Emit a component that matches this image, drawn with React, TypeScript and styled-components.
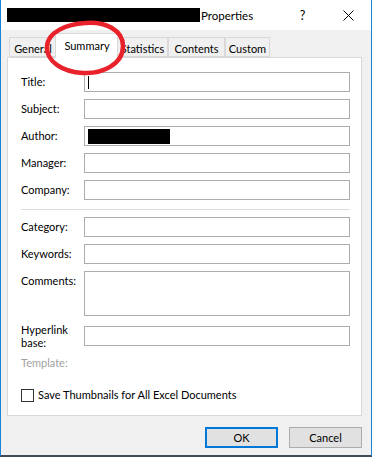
import React from "react";
import styled, { createGlobalStyle } from "styled-components";

const GlobalStyle = createGlobalStyle`
  html, body { margin: 0; padding: 0; background: #ffffff; }
  body { font-family: Lato, "Liberation Sans", sans-serif; }
`;

const Window = styled.div`
  position: relative;
  width: 372px;
  height: 457px;
  box-sizing: border-box;
  border-left: 1px solid #1883d7;
  border-right: 1px solid #1883d7;
  border-bottom: 2px solid #3e4a55;
  background: #f0f0f0;
  display: flex;
  flex-direction: column;
  font: 11px Lato, "Liberation Sans", sans-serif;
  color: #000000;
`;

const TitleBar = styled.div`
  height: 30px;
  background: #ffffff;
  display: flex;
  align-items: center;
  padding-left: 6px;
  flex-shrink: 0;
`;

const Redacted = styled.div<{ $w: number; $h: number }>`
  width: ${(p) => p.$w}px;
  height: ${(p) => p.$h}px;
  background: #000000;
  flex-shrink: 0;
`;

const TitleText = styled.span`
  margin-left: 1px;
  font-size: 11.5px;
  flex: 1;
  margin-top: 1px;
`;

const TitleButton = styled.div<{ $w: number }>`
  width: ${(p) => p.$w}px;
  height: 30px;
  display: flex;
  align-items: center;
  justify-content: center;
  font-size: 12.5px;
`;

const Body = styled.div`
  flex: 1;
  display: flex;
  flex-direction: column;
  padding: 3px 9px 0 6px;
`;

const TabStrip = styled.div`
  display: flex;
  align-items: flex-end;
  height: 24px;
  margin-left: 2px;
  position: relative;
  z-index: 1;
  flex-shrink: 0;
`;

const Tab = styled.div<{ $w: number; $active?: boolean }>`
  width: ${(p) => p.$w}px;
  box-sizing: border-box;
  height: ${(p) => (p.$active ? 25 : 20)}px;
  margin-bottom: ${(p) => (p.$active ? -1 : 0)}px;
  background: ${(p) => (p.$active ? "#ffffff" : "#f0f0f0")};
  border: 1px solid #d9d9d9;
  border-bottom: ${(p) => (p.$active ? "none" : "1px solid #d9d9d9")};
  margin-left: ${(p) => (p.$active ? -2 : 0)}px;
  margin-right: ${(p) => (p.$active ? -2 : 0)}px;
  display: flex;
  justify-content: center;
  align-items: ${(p) => (p.$active ? "flex-start" : "center")};
  padding-top: ${(p) => (p.$active ? 5 : 2)}px;
  white-space: nowrap;
  overflow: hidden;
  &:first-child { margin-left: 0; }
`;

const Panel = styled.div`
  height: 359px;
  flex-shrink: 0;
  box-sizing: border-box;
  background: #ffffff;
  border: 1px solid #d9d9d9;
  padding: 14px 11px 0 13px;
  display: flex;
  flex-direction: column;
  & > * { flex-shrink: 0; }
`;

const FieldGroup = styled.div`
  display: flex;
  flex-direction: column;
  gap: 7px;
`;

const Row = styled.div<{ $top?: boolean; $gap?: number }>`
  display: grid;
  grid-template-columns: 63px 266px;
  align-items: ${(p) => (p.$top ? "start" : "center")};
  margin-top: ${(p) => p.$gap ?? 0}px;
`;

const Label = styled.label`
  line-height: 20px;
`;

const TwoLineLabel = styled.label`
  height: 20px;
  display: flex;
  flex-direction: column;
  justify-content: center;
  line-height: 13px;
`;

const Input = styled.div<{ $h?: number }>`
  height: ${(p) => p.$h ?? 20}px;
  box-sizing: border-box;
  border: 1px solid #adadad;
  background: #ffffff;
  display: flex;
  align-items: center;
  padding-left: 3px;
`;

const Caret = styled.div`
  width: 1px;
  height: 13px;
  background: #000000;
`;

const Separator = styled.div`
  height: 1px;
  width: 329px;
  background: #dcdcdc;
  margin: 9px 0 7px;
`;

const TemplateRow = styled.div`
  margin-top: 7px;
  line-height: 20px;
  color: #a0a0a0;
`;

const CheckRow = styled.div`
  display: flex;
  align-items: center;
  gap: 4px;
  margin-top: 12px;
  line-height: 20px;
`;

const CheckBox = styled.div`
  width: 13px;
  height: 13px;
  box-sizing: border-box;
  border: 1px solid #333333;
  background: #ffffff;
`;

const ButtonRow = styled.div`
  display: flex;
  justify-content: flex-end;
  gap: 11px;
  padding-top: 11px;
`;

const Button = styled.div<{ $default?: boolean }>`
  width: 73px;
  height: 21px;
  box-sizing: border-box;
  background: #e1e1e1;
  border: ${(p) => (p.$default ? "2px solid #0078d7" : "1px solid #adadad")};
  display: flex;
  align-items: center;
  justify-content: center;
`;

const Annotation = styled.svg`
  position: absolute;
  left: 40px;
  top: 18px;
  pointer-events: none;
  z-index: 5;
`;

const fields = ["Title:", "Subject:", "Author:", "Manager:", "Company:"];

const App = () => {
  return (
    <>
      <GlobalStyle />
      <Window>
        <TitleBar>
          <Redacted $w={193} $h={14} />
          <TitleText>Properties</TitleText>
          <TitleButton $w={45}>?</TitleButton>
          <TitleButton $w={46}>
            <svg width="11" height="11" viewBox="0 0 11 11">
              <path d="M0.5 0.5 L10.5 10.5 M10.5 0.5 L0.5 10.5" stroke="#000" strokeWidth="1" />
            </svg>
          </TitleButton>
        </TitleBar>
        <Body>
          <TabStrip>
            <Tab $w={48}>General</Tab>
            <Tab $w={64} $active>Summary</Tab>
            <Tab $w={51}>Statistics</Tab>
            <Tab $w={57}>Contents</Tab>
            <Tab $w={45}>Custom</Tab>
          </TabStrip>
          <Panel>
            <FieldGroup>
              {fields.map((f) => (
                <Row key={f}>
                  <Label>{f}</Label>
                  <Input>
                    {f === "Title:" && <Caret />}
                    {f === "Author:" && <Redacted $w={82} $h={15} />}
                  </Input>
                </Row>
              ))}
            </FieldGroup>
            <Separator />
            <FieldGroup>
              <Row>
                <Label>Category:</Label>
                <Input />
              </Row>
              <Row>
                <Label>Keywords:</Label>
                <Input />
              </Row>
              <Row $top>
                <Label>Comments:</Label>
                <Input $h={45} />
              </Row>
            </FieldGroup>
            <Row $gap={10}>
              <TwoLineLabel>
                <span>Hyperlink</span>
                <span>base:</span>
              </TwoLineLabel>
              <Input />
            </Row>
            <TemplateRow>Template:</TemplateRow>
            <CheckRow>
              <CheckBox />
              <span>Save Thumbnails for All Excel Documents</span>
            </CheckRow>
          </Panel>
          <ButtonRow>
            <Button $default>OK</Button>
            <Button>Cancel</Button>
          </ButtonRow>
        </Body>
        <Annotation width="90" height="62" viewBox="0 0 90 62">
          <path
            d="M44 5 C64 3 82 12 82 28 C82 46 62 56 42 55 C22 54 5 44 6 28 C7 14 26 6 44 5 Z"
            fill="none"
            stroke="#e8212b"
            strokeWidth="4.5"
          />
        </Annotation>
      </Window>
    </>
  );
};

export default App;
